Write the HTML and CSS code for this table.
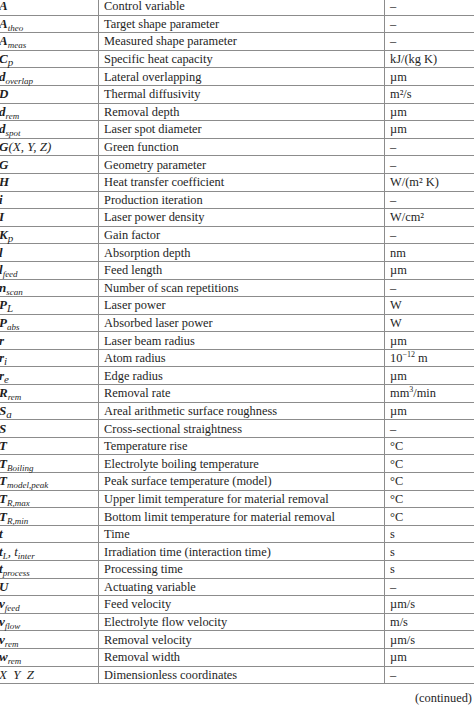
FILE: index.html
```html
<!DOCTYPE html>
<html>
<head>
<meta charset="utf-8">
<link rel="stylesheet" href="styles.css">
</head>
<body>
<div class="page">
<table class="nomen">
<tr><td class="sym"><b>A</b></td><td>Control variable</td><td>–</td></tr>
<tr><td class="sym"><b>A</b><sub>theo</sub></td><td>Target shape parameter</td><td>–</td></tr>
<tr><td class="sym"><b>A</b><sub>meas</sub></td><td>Measured shape parameter</td><td>–</td></tr>
<tr><td class="sym"><b>C</b><sub class="big">p</sub></td><td>Specific heat capacity</td><td>kJ/(kg K)</td></tr>
<tr><td class="sym"><b>d</b><sub>overlap</sub></td><td>Lateral overlapping</td><td>µm</td></tr>
<tr><td class="sym"><b>D</b></td><td>Thermal diffusivity</td><td>m²/s</td></tr>
<tr><td class="sym"><b>d</b><sub>rem</sub></td><td>Removal depth</td><td>µm</td></tr>
<tr><td class="sym"><b>d</b><sub>spot</sub></td><td>Laser spot diameter</td><td>µm</td></tr>
<tr><td class="sym"><b>G</b><i>(X, Y, Z)</i></td><td>Green function</td><td>–</td></tr>
<tr><td class="sym"><b>G</b></td><td>Geometry parameter</td><td>–</td></tr>
<tr><td class="sym"><b>H</b></td><td>Heat transfer coefficient</td><td>W/(m² K)</td></tr>
<tr><td class="sym"><b>i</b></td><td>Production iteration</td><td>–</td></tr>
<tr><td class="sym"><b>I</b></td><td>Laser power density</td><td>W/cm²</td></tr>
<tr><td class="sym"><b>K</b><sub class="big">p</sub></td><td>Gain factor</td><td>–</td></tr>
<tr><td class="sym"><b>l</b></td><td>Absorption depth</td><td>nm</td></tr>
<tr><td class="sym"><b>l</b><sub>feed</sub></td><td>Feed length</td><td>µm</td></tr>
<tr><td class="sym"><b>n</b><sub>scan</sub></td><td>Number of scan repetitions</td><td>–</td></tr>
<tr><td class="sym"><b>P</b><sub class="big">L</sub></td><td>Laser power</td><td>W</td></tr>
<tr><td class="sym"><b>P</b><sub>abs</sub></td><td>Absorbed laser power</td><td>W</td></tr>
<tr><td class="sym"><b>r</b></td><td>Laser beam radius</td><td>µm</td></tr>
<tr><td class="sym"><b>r</b><sub class="big">i</sub></td><td>Atom radius</td><td>10<sup>−12</sup> m</td></tr>
<tr><td class="sym"><b>r</b><sub class="big">e</sub></td><td>Edge radius</td><td>µm</td></tr>
<tr><td class="sym"><b>R</b><sub>rem</sub></td><td>Removal rate</td><td>mm<sup>3</sup>/min</td></tr>
<tr><td class="sym"><b>S</b><sub class="big">a</sub></td><td>Areal arithmetic surface roughness</td><td>µm</td></tr>
<tr><td class="sym"><b>S</b></td><td>Cross-sectional straightness</td><td>–</td></tr>
<tr><td class="sym"><b>T</b></td><td>Temperature rise</td><td>°C</td></tr>
<tr><td class="sym"><b>T</b><sub>Boiling</sub></td><td>Electrolyte boiling temperature</td><td>°C</td></tr>
<tr><td class="sym"><b>T</b><sub>model,peak</sub></td><td>Peak surface temperature (model)</td><td>°C</td></tr>
<tr><td class="sym"><b>T</b><sub>R,max</sub></td><td>Upper limit temperature for material removal</td><td>°C</td></tr>
<tr><td class="sym"><b>T</b><sub>R,min</sub></td><td>Bottom limit temperature for material removal</td><td>°C</td></tr>
<tr><td class="sym"><b>t</b></td><td>Time</td><td>s</td></tr>
<tr><td class="sym"><b>t</b><sub>L</sub><i>, t</i><sub>inter</sub></td><td>Irradiation time (interaction time)</td><td>s</td></tr>
<tr><td class="sym"><b>t</b><sub>process</sub></td><td>Processing time</td><td>s</td></tr>
<tr><td class="sym"><b>U</b></td><td>Actuating variable</td><td>–</td></tr>
<tr><td class="sym"><b>v</b><sub>feed</sub></td><td>Feed velocity</td><td>µm/s</td></tr>
<tr><td class="sym"><b>v</b><sub>flow</sub></td><td>Electrolyte flow velocity</td><td>m/s</td></tr>
<tr><td class="sym"><b>v</b><sub>rem</sub></td><td>Removal velocity</td><td>µm/s</td></tr>
<tr><td class="sym"><b>w</b><sub>rem</sub></td><td>Removal width</td><td>µm</td></tr>
<tr><td class="sym"><i class="xyz">X Y Z</i></td><td>Dimensionless coordinates</td><td>–</td></tr>
</table>
<p class="cont">(continued)</p>
</div>
</body>
</html>
```
FILE: styles.css
```css
html, body {
  margin: 0;
  padding: 0;
  background: #ffffff;
}
body {
  width: 474px;
  height: 707px;
  overflow: hidden;
  font-family: "Liberation Serif", "Times New Roman", serif;
  color: #1e1e1e;
}
.page {
  width: 474px;
  overflow: hidden;
}
.nomen {
  border-collapse: collapse;
  width: 490px;
  margin-top: -3px;
  margin-left: -5px;
  table-layout: fixed;
  font-size: 12.4px;
}
.nomen td {
  height: 16.6px;
  padding: 0 5px;
  border-top: 1px solid #8c8c8c;
  border-bottom: 1px solid #8c8c8c;
  line-height: 16px;
  white-space: nowrap;
  vertical-align: middle;
}
.nomen td:nth-child(1) { width: 94px; padding-left: 4px; font-size: 13px; }
.nomen td:nth-child(2) { width: 275px; border-left: 1px solid #8c8c8c; border-right: 1px solid #8c8c8c; }
.nomen td:nth-child(3) { width: auto; }
.sym b {
  font-weight: bold;
  font-style: italic;
}
.sym i {
  font-style: italic;
}
.sym sub {
  font-style: italic;
  font-size: 9px;
  vertical-align: -3px;
  line-height: 0;
}
.sym sub.big {
  font-size: 11px;
}
.xyz {
  word-spacing: 3px;
}
sup {
  font-size: 8px;
  vertical-align: 5px;
  line-height: 0;
}
.cont {
  margin: 6px 2px 0 0;
  text-align: right;
  font-size: 12.4px;
  line-height: 16px;
}
```
